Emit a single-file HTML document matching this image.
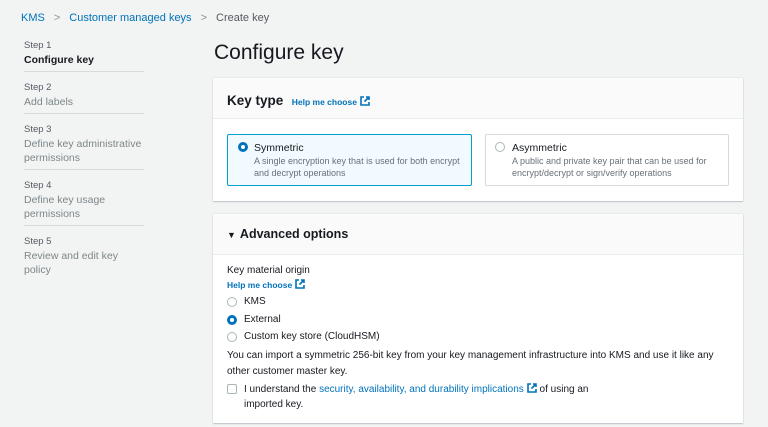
<!DOCTYPE html>
<html><head><style>
*{box-sizing:border-box;margin:0;padding:0}
body{width:768px;height:427px;overflow:hidden;background:#f2f3f3;font-family:"Liberation Sans",sans-serif;color:#16191f;position:relative}
.a{position:absolute}
.bc{top:12px;left:21px;font-size:11px;color:#545b64}
.bc span.l{color:#0073bb}
.bc .s{color:#879596;margin:0 9px}
.step{left:24px;width:120px;font-size:9.5px;color:#545b64;border-bottom:1px solid #d5dbdb}
.step b{display:block;font-weight:normal;font-size:10.5px;color:#7d878a;line-height:14px;margin-top:2px}
h1{position:absolute;left:214px;top:41px;font-size:21px;font-weight:normal;color:#16191f}
.card{background:#fff;box-shadow:0 1px 1px rgba(0,31,63,.2),0 0 1px rgba(0,31,63,.2)}
.hd{background:#fafafa;border-bottom:1px solid #eaeded;height:41px}
.tile{border:1px solid #d5dbdb;border-radius:2px;font-size:10.5px;padding:7px 10px 0 26px}
.tile small{display:block;font-size:9px;color:#687078;line-height:11.5px;margin-top:2px}
.rad{position:absolute;width:10px;height:10px;border-radius:50%;border:1px solid #aab7b8;background:#fff}
.rad.on{border:3px solid #0073bb}
.help{color:#0073bb;font-size:8.5px;font-weight:bold}
.ext{display:inline-block;width:10px;height:10px;vertical-align:-1px;margin-left:3px}
.t{font-size:10px;color:#16191f}
</style></head><body>
<svg width="0" height="0" style="position:absolute"><symbol id="e" viewBox="0 0 10 10"><path d="M4 1H1v8h8V6" fill="none" stroke="#0073bb" stroke-width="1.6"/><path d="M6 1h3v3M9 1L4.5 5.5" fill="none" stroke="#0073bb" stroke-width="1.6"/></symbol></svg>
<div class="a bc"><span class="l">KMS</span><span class="s">&gt;</span><span class="l">Customer managed keys</span><span class="s">&gt;</span>Create key</div>

<div class="a step" style="top:40px;height:32px">Step 1<b style="color:#16191f;font-weight:bold">Configure key</b></div>
<div class="a step" style="top:82px;height:32px">Step 2<b>Add labels</b></div>
<div class="a step" style="top:124px;height:46px">Step 3<b>Define key administrative permissions</b></div>
<div class="a step" style="top:180px;height:46px">Step 4<b>Define key usage permissions</b></div>
<div class="a step" style="top:236px;height:46px;border:none">Step 5<b>Review and edit key policy</b></div>

<h1>Configure key</h1>

<div class="a card" style="left:213px;top:78px;width:530px;height:123px">
 <div class="hd" style="padding:14px 14px 0"><span style="font-size:13.5px;font-weight:bold">Key type</span> <span class="help" style="margin-left:4px">Help me choose</span><svg class="ext"><use href="#e"/></svg></div>
 <div class="a tile" style="left:14px;top:56px;width:245px;height:52px;background:#f1faff;border-color:#00a1c9">Symmetric<small>A single encryption key that is used for both encrypt and decrypt operations</small></div>
 <div class="rad on" style="left:25px;top:64px"></div>
 <div class="a tile" style="left:272px;top:56px;width:244px;height:52px">Asymmetric<small>A public and private key pair that can be used for encrypt/decrypt or sign/verify operations</small></div>
 <div class="rad" style="left:282px;top:64px"></div>
</div>

<div class="a card" style="left:213px;top:214px;width:530px;height:209px">
 <div class="hd" style="padding:13px 14px 0;font-size:12.5px;font-weight:bold"><span style="font-size:9px;margin-right:4px">▼</span>Advanced options</div>
 <div class="a t" style="left:14px;top:51px">Key material origin</div>
 <div class="a help" style="left:14px;top:65px">Help me choose<svg class="ext"><use href="#e"/></svg></div>
 <div class="rad" style="left:14px;top:83px"></div><div class="a t" style="left:31px;top:82px">KMS</div>
 <div class="rad on" style="left:14px;top:101px"></div><div class="a t" style="left:31px;top:100px">External</div>
 <div class="rad" style="left:14px;top:118px"></div><div class="a t" style="left:31px;top:117px">Custom key store (CloudHSM)</div>
 <div class="a t" style="left:14px;top:134px;width:500px;line-height:16px">You can import a symmetric 256-bit key from your key management infrastructure into KMS and use it like any other customer master key.</div>
 <div class="a" style="left:14px;top:170px;width:10px;height:10px;border:1px solid #aab7b8;border-radius:2px"></div>
 <div class="a t" style="left:31px;top:168px;width:360px;line-height:15px">I understand the <span style="color:#0073bb">security, availability, and durability implications</span><svg class="ext"><use href="#e"/></svg> of using an imported key.</div>
</div>
</body></html>
